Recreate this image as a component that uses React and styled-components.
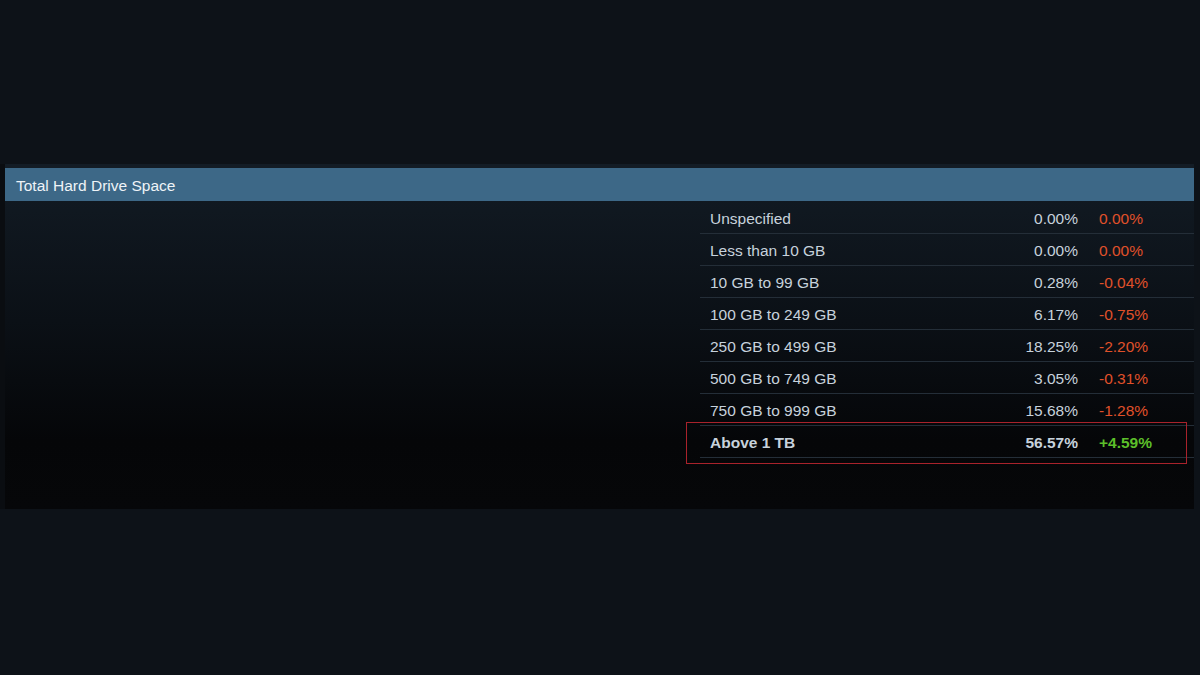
import React from 'react'
import styled, { createGlobalStyle } from 'styled-components'

const GlobalStyle = createGlobalStyle`
    html, body {
        margin: 0;
        padding: 0;
        background: #0d1218;
        font-family: "Liberation Sans", Arial, sans-serif;
    }
`

const Page = styled.div`
    width: 1200px;
    height: 675px;
    padding-top: 164px;
    box-sizing: border-box;
`

const Panel = styled.div`
    margin: 0 6px 0 5px;
    border-top: 4px solid #131c25;
    background: linear-gradient(to bottom, #121b24 0%, #0b1016 45%, #050608 80%, #060709 100%);
    height: 341px;
    box-shadow: -5px 0 0 #0a0d11;
`

const Header = styled.div`
    height: 33px;
    background: #3d6887;
    color: #eef3f7;
    font-size: 15.5px;
    line-height: 35px;
    padding-left: 11px;
`

const Body = styled.div`
    display: flex;
    justify-content: flex-end;
    padding-top: 1px;
`

const Table = styled.div`
    width: 494px;
`

const Row = styled.div`
    position: relative;
    display: grid;
    grid-template-columns: 1fr 100px 95px;
    column-gap: 21px;
    align-items: center;
    height: 29px;
    padding: 2px 0 0 10px;
    border-bottom: 1px solid #242e38;
    font-size: 15.5px;
    color: #c7d2dc;
    font-weight: ${p => (p.$strong ? 700 : 400)};
`

const Value = styled.span`
    text-align: right;
`

const Change = styled.span`
    color: ${p => (p.$up ? '#5cbf2a' : '#e0512a')};
`

const Highlight = styled.div`
    position: absolute;
    top: -4px;
    left: -14px;
    right: 7px;
    bottom: -7px;
    border: 1px solid #a9222b;
`

const rows = [
    ['Unspecified', '0.00%', '0.00%'],
    ['Less than 10 GB', '0.00%', '0.00%'],
    ['10 GB to 99 GB', '0.28%', '-0.04%'],
    ['100 GB to 249 GB', '6.17%', '-0.75%'],
    ['250 GB to 499 GB', '18.25%', '-2.20%'],
    ['500 GB to 749 GB', '3.05%', '-0.31%'],
    ['750 GB to 999 GB', '15.68%', '-1.28%'],
]

const App = () => {
    return (
        <Page>
            <GlobalStyle />
            <Panel>
                <Header>Total Hard Drive Space</Header>
                <Body>
                    <Table>
                        {rows.map(([label, value, change]) => (
                            <Row key={label}>
                                <span>{label}</span>
                                <Value>{value}</Value>
                                <Change>{change}</Change>
                            </Row>
                        ))}
                        <Row $strong>
                            <span>Above 1 TB</span>
                            <Value>56.57%</Value>
                            <Change $up>+4.59%</Change>
                            <Highlight />
                        </Row>
                    </Table>
                </Body>
            </Panel>
        </Page>
    )
}

export default App
